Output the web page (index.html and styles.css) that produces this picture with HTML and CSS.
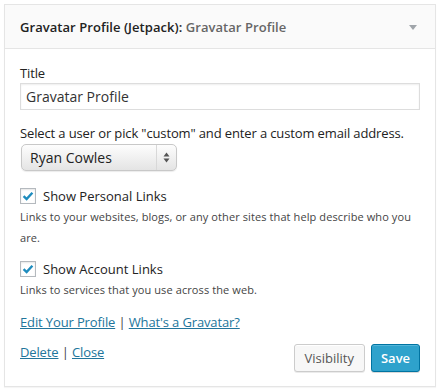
FILE: index.html
```html
<!DOCTYPE html>
<html>
<head>
<meta charset="utf-8">
<link rel="stylesheet" href="styles.css">
</head>
<body>
<div class="widget">
  <div class="widget-top">
    <h3 class="widget-title">Gravatar Profile (Jetpack):<span class="in-title"> Gravatar Profile</span></h3>
    <span class="toggle"></span>
  </div>
  <div class="widget-inside">
    <div class="field field-title">
      <label class="label">Title</label>
      <input class="text-input" type="text" value="Gravatar Profile">
    </div>
    <div class="field field-user">
      <label class="label">Select a user or pick "custom" and enter a custom email address.</label>
      <span class="select">
        <span class="select-value">Ryan Cowles</span>
        <span class="select-arrows">
          <svg width="7" height="11" viewBox="0 0 7 11"><path d="M3.5 0.5 L6.5 4.5 H0.5 Z M3.5 10.5 L6.5 6.5 H0.5 Z" fill="#555"/></svg>
        </span>
      </span>
    </div>
    <div class="check check-first">
      <label class="check-row"><span class="box"><svg width="12" height="10" viewBox="0 0 12 10"><path d="M1.6 5.2 L4.6 8.1 L10.4 1.7" fill="none" stroke="#1e8cbe" stroke-width="2.4"/></svg></span>Show Personal Links</label>
      <p class="desc">Links to your websites, blogs, or any other sites that help describe who you are.</p>
    </div>
    <div class="check">
      <label class="check-row"><span class="box"><svg width="12" height="10" viewBox="0 0 12 10"><path d="M1.6 5.2 L4.6 8.1 L10.4 1.7" fill="none" stroke="#1e8cbe" stroke-width="2.4"/></svg></span>Show Account Links</label>
      <p class="desc">Links to services that you use across the web.</p>
    </div>
    <p class="links"><a href="#">Edit Your Profile</a> | <a href="#">What's a Gravatar?</a></p>
    <div class="controls">
      <div class="controls-left"><a href="#">Delete</a> | <a href="#">Close</a></div>
      <div class="controls-right">
        <button class="btn">Visibility</button>
        <button class="btn btn-primary">Save</button>
      </div>
    </div>
  </div>
</div>
</body>
</html>
```

FILE: styles.css
```css
* { box-sizing: border-box; }
body {
  margin: 0;
  padding: 4px;
  background: #fff;
  font-family: "Open Sans", sans-serif;
  font-size: 13px;
  color: #444;
}
.widget {
  width: 432px;
  border: 1px solid #e5e5e5;
  background: #fff;
  box-shadow: 0 1px 1px rgba(0,0,0,0.04);
}
.widget-top {
  background: #fafafa;
  height: 44px;
  border-bottom: 1px solid #e5e5e5;
  display: flex;
  align-items: center;
  justify-content: space-between;
  padding: 0 18px 0 15px;
}
.widget-title {
  margin: 0;
  font-size: 13px;
  font-weight: 600;
  color: #222;
  letter-spacing: 0.05px;
}
.in-title { color: #666; }
.toggle {
  width: 0; height: 0;
  margin-top: 2px;
  border-left: 4px solid transparent;
  border-right: 4px solid transparent;
  border-top: 5px solid #a0a5aa;
}
.widget-inside {
  padding: 15px 15px 14px;
}
.field-user { margin-top: 14px; }
.label {
  display: block;
  color: #222;
  line-height: 18px;
  letter-spacing: -0.13px;
}
.text-input {
  display: block;
  margin-top: 1px;
  width: 400px;
  height: 27px;
  border: 1px solid #ddd;
  padding: 2px 5px;
  font-family: "Open Sans", sans-serif;
  font-size: 14px;
  color: #333;
  box-shadow: inset 0 1px 2px rgba(0,0,0,0.07);
  outline: none;
}
.select {
  display: flex;
  align-items: center;
  width: 156px;
  height: 27px;
  margin: 2px 0 0 1px;
  border: 1px solid #c8c8c8;
  border-radius: 5px;
  background: linear-gradient(#fdfdfd, #e4e4e4);
  box-shadow: 0 1px 1px rgba(0,0,0,0.08);
}
.select-value {
  flex: 1;
  padding-left: 8px;
  font-size: 14px;
  color: #222;
}
.select-arrows {
  width: 20px;
  height: 100%;
  border-left: 1px solid #d8d8d8;
  display: flex;
  align-items: center;
  justify-content: center;
}
.check { margin-top: 12px; }
.check-first { margin-top: 16px; }
.check-row {
  display: flex;
  align-items: center;
  color: #222;
  font-size: 13px;
  line-height: 18px;
}
.box {
  width: 16px; height: 16px;
  border: 1px solid #b4b9be;
  background: #fff;
  box-shadow: inset 0 1px 2px rgba(0,0,0,0.1);
  margin-right: 7px;
  display: flex;
  align-items: center;
  justify-content: center;
}
.desc {
  margin: 1px 0 0;
  font-size: 11px;
  line-height: 21px;
  color: #444;
  letter-spacing: 0.1px;
}
.links {
  margin: 13px 0 0;
  line-height: 18px;
  color: #444;
  letter-spacing: -0.13px;
}
a { color: #21759b; text-decoration: underline; }
.controls {
  display: flex;
  justify-content: space-between;
  align-items: flex-start;
  margin-top: 12px;
}
.controls-left { line-height: 18px; letter-spacing: -0.13px; }
.controls-right { display: flex; gap: 6px; margin-top: 1px; }
.btn {
  font-family: "Open Sans", sans-serif;
  font-size: 13px;
  height: 28px;
  padding: 0 10px;
  border: 1px solid #ccc;
  border-radius: 3px;
  background: #f7f7f7;
  color: #555;
  box-shadow: inset 0 1px 0 #fff, 0 1px 0 rgba(0,0,0,0.08);
}
.btn-primary {
  width: 49px;
  padding: 0;
  background: #2ea2cc;
  border-color: #0074a2;
  color: #fff;
  font-weight: 600;
  box-shadow: inset 0 1px 0 rgba(120,200,230,0.5), 0 1px 0 rgba(0,0,0,0.15);
}
```
